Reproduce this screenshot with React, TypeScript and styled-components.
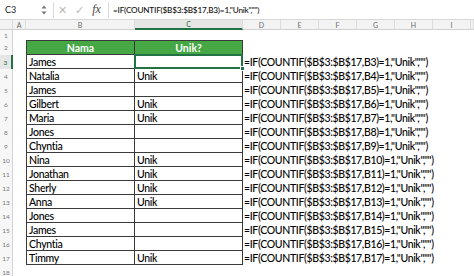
import React from 'react';
import styled, {createGlobalStyle, css} from 'styled-components';

const GlobalStyle = createGlobalStyle`
    * {
        box-sizing: border-box;
    }
    body {
        margin: 0;
        background: #ffffff;
        font-family: Lato, 'Liberation Sans', sans-serif;
    }
`;

const Window = styled.div`
    width: 474px;
    height: 276px;
    overflow: hidden;
    background: #ffffff;
`;

const FormulaBar = styled.div`
    display: flex;
    align-items: center;
    height: 20px;
    border-bottom: 1px solid #d6d6d6;
    background: #ffffff;
    color: #222;
`;

const NameBox = styled.div`
    width: 40px;
    padding-left: 5px;
    font-size: 9px;
`;

const Spinner = styled.svg`
    width: 8px;
    height: 12px;
    margin-right: 5px;
`;

const Divider = styled.div`
    width: 1px;
    height: 16px;
    background: #dadada;
`;

const ToolIcon = styled.div<{$italic?: boolean}>`
    width: 17px;
    text-align: center;
    font-size: 11px;
    color: #b8b8b8;
    ${(props) => props.$italic && css`
        font-family: 'Liberation Serif', serif;
        font-style: italic;
        color: #444;
        font-size: 12px;
    `}
`;

const IconGroup = styled.div`
    display: flex;
    align-items: center;
    padding: 0 3px 0 0;
`;

const FormulaText = styled.div`
    padding-left: 4px;
    font-size: 8.2px;
    font-weight: 500;
    letter-spacing: -0.2px;
    white-space: nowrap;
    color: #111;
`;

const Sheet = styled.div`
    display: grid;
    grid-template-columns: 13px 13px 109px 108px repeat(6, 38px) 1fr;
    grid-template-rows: 10px 10px 15px repeat(15, 14px) 14px;
`;

const ColHeader = styled.div<{$active?: boolean}>`
    display: flex;
    align-items: center;
    justify-content: center;
    background: #f3f3f3;
    border-right: 1px solid #dcdcdc;
    border-bottom: 1px solid #d0d0d0;
    font-size: 7px;
    color: #6b6b6b;
    ${(props) => props.$active && css`
        background: #e6e6e6;
        color: #1e6b3c;
        border-bottom: 2px solid #217346;
    `}
`;

const Corner = styled(ColHeader)`
    background: #f3f3f3;
`;

const RowHeader = styled.div<{$active?: boolean}>`
    display: flex;
    align-items: center;
    justify-content: center;
    background: #f7f7f7;
    border-right: 1px solid #d4d4d4;
    font-size: 6.5px;
    color: #777;
    ${(props) => props.$active && css`
        background: #e6e6e6;
        color: #1e6b3c;
        border-right: 2px solid #217346;
    `}
`;

const Blank = styled.div``;

const TableCell = styled.div<{$first?: boolean; $top?: boolean}>`
    display: flex;
    align-items: center;
    padding-left: 2px;
    font-size: 10.5px;
    font-weight: 500;
    letter-spacing: -0.3px;
    color: #000;
    white-space: nowrap;
    border-right: 1px solid #3a3a3a;
    border-bottom: 1px solid #3a3a3a;
    ${(props) => props.$first && css`
        border-left: 1px solid #3a3a3a;
    `}
    ${(props) => props.$top && css`
        border-top: 1px solid #3a3a3a;
    `}
`;

const HeadCell = styled(TableCell)`
    justify-content: center;
    padding-left: 0;
    background: #45a845;
    color: #ffffff;
    font-weight: 700;
    letter-spacing: 0;
`;

const SelectedCell = styled(TableCell)`
    position: relative;

    &::after {
        content: '';
        position: absolute;
        left: -1px;
        top: -1px;
        right: -1px;
        bottom: -1px;
        border: 2px solid #217346;
    }
`;

const FillHandle = styled.span`
    position: absolute;
    right: -3px;
    bottom: -3px;
    width: 5px;
    height: 5px;
    background: #217346;
    border: 1px solid #ffffff;
    z-index: 1;
`;

const FormulaCell = styled.div`
    display: flex;
    align-items: center;
    padding-left: 1px;
    font-size: 10.5px;
    font-weight: 500;
    letter-spacing: -0.35px;
    color: #000;
    white-space: nowrap;
    overflow: visible;
    grid-column: span 7;
`;

const columns = ['A', 'B', 'C', 'D', 'E', 'F', 'G', 'H', 'I', ''];

const rows: [string, string][] = [
    ['James', ''],
    ['Natalia', 'Unik'],
    ['James', ''],
    ['Gilbert', 'Unik'],
    ['Maria', 'Unik'],
    ['Jones', ''],
    ['Chyntia', ''],
    ['Nina', 'Unik'],
    ['Jonathan', 'Unik'],
    ['Sherly', 'Unik'],
    ['Anna', 'Unik'],
    ['Jones', ''],
    ['James', ''],
    ['Chyntia', ''],
    ['Timmy', 'Unik'],
];

const formula = (row: number) => `=IF(COUNTIF($B$3:$B$17,B${row})=1,"Unik","")`;

const App = () => {
    return (
        <Window>
            <GlobalStyle/>
            <FormulaBar>
                <NameBox>{'C3'}</NameBox>
                <Spinner viewBox='0 0 8 12'>
                    <path d='M4 1.5 L6.5 4.5 L1.5 4.5 Z' fill='#777'/>
                    <path d='M4 10.5 L6.5 7.5 L1.5 7.5 Z' fill='#777'/>
                </Spinner>
                <Divider/>
                <IconGroup>
                    <ToolIcon>{'✕'}</ToolIcon>
                    <ToolIcon>{'✓'}</ToolIcon>
                    <ToolIcon $italic={true}>{'fx'}</ToolIcon>
                </IconGroup>
                <Divider/>
                <FormulaText>{formula(3)}</FormulaText>
            </FormulaBar>
            <Sheet>
                <Corner/>
                {columns.map((c, i) => (
                    <ColHeader
                        key={i}
                        $active={c === 'C'}
                    >
                        {c}
                    </ColHeader>
                ))}

                <RowHeader>{'1'}</RowHeader>
                <Blank style={{gridColumn: 'span 10'}}/>

                <RowHeader>{'2'}</RowHeader>
                <Blank/>
                <HeadCell
                    $first={true}
                    $top={true}
                >
                    {'Nama'}
                </HeadCell>
                <HeadCell $top={true}>{'Unik?'}</HeadCell>
                <Blank style={{gridColumn: 'span 7'}}/>

                {rows.map(([name, unik], i) => {
                    const rowNum = i + 3;
                    return (
                        <React.Fragment key={rowNum}>
                            <RowHeader $active={rowNum === 3}>{rowNum}</RowHeader>
                            <Blank/>
                            <TableCell $first={true}>{name}</TableCell>
                            {rowNum === 3 ? (
                                <SelectedCell>
                                    <FillHandle/>
                                </SelectedCell>
                            ) : (
                                <TableCell>{unik}</TableCell>
                            )}
                            <FormulaCell>{formula(rowNum)}</FormulaCell>
                        </React.Fragment>
                    );
                })}

                <RowHeader>{'18'}</RowHeader>
                <Blank style={{gridColumn: 'span 10'}}/>
            </Sheet>
        </Window>
    );
};

export default App;
